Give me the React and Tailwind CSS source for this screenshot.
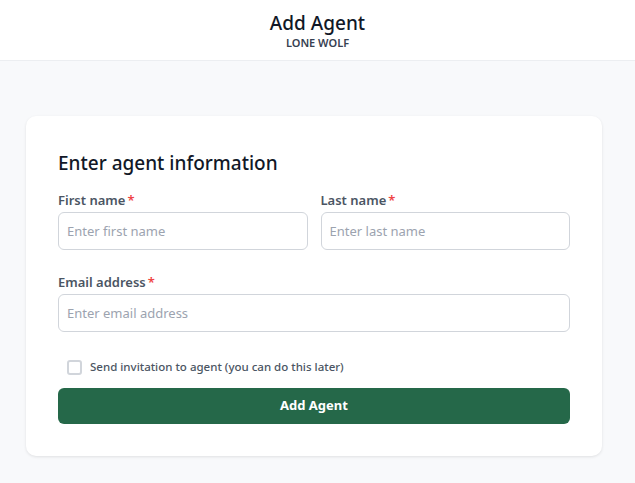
export default function App() {
  return (
    <div
      className="min-h-[483px] bg-[#f8f9fb] text-[#111827]"
      style={{ fontFamily: '"Noto Sans", sans-serif' }}
    >
      <Header></Header>
      <div className="pt-[55px] pl-[26px]">
        <AgentForm></AgentForm>
      </div>
    </div>
  );
}

function Header() {
  return (
    <div className="h-[61px] bg-white border-b border-[#eceef1] flex flex-col items-center pt-[10px]">
      <h1 className="text-[19px] leading-[26px] font-medium text-[#111827]">Add Agent</h1>
      <span className="text-[11px] leading-[14px] font-semibold text-[#374151]">LONE WOLF</span>
    </div>
  );
}

function Label({ children }) {
  return (
    <label className="block text-[13px] leading-[18px] font-semibold text-[#4b5563] mb-[3px]">
      {children}
      <span className="text-[#ef4444] ml-[2px]">*</span>
    </label>
  );
}

function Input({ placeholder }) {
  return (
    <input
      type="text"
      placeholder={placeholder}
      className="w-full h-[38px] px-[8px] rounded-md border border-[#d1d5db] bg-white text-[13px] outline-none placeholder:text-[#9ca3af]"
    />
  );
}

function AgentForm() {
  return (
    <div className="w-[576px] bg-white rounded-[10px] shadow-[0_1px_3px_rgba(0,0,0,0.1)] px-[32px] pt-[34px] pb-[32px]">
      <h2 className="text-[19px] leading-[26px] font-medium text-[#111827] mb-[15px]">
        Enter agent information
      </h2>
      <div className="grid grid-cols-2 gap-x-[13px]">
        <div>
          <Label>First name</Label>
          <Input placeholder="Enter first name"></Input>
        </div>
        <div>
          <Label>Last name</Label>
          <Input placeholder="Enter last name"></Input>
        </div>
      </div>
      <div className="mt-[23px]">
        <Label>Email address</Label>
        <Input placeholder="Enter email address"></Input>
      </div>
      <div className="flex items-center mt-[27px] pl-[9px] gap-[8px]">
        <input
          type="checkbox"
          className="appearance-none w-[15px] h-[15px] rounded-[3px] border-2 border-[#d1d5db] bg-white"
        />
        <span className="text-[11.5px] leading-[16px] font-medium text-[#4b5563]">
          Send invitation to agent (you can do this later)
        </span>
      </div>
      <button className="mt-[13px] w-full h-[36px] rounded-md bg-[#256849] text-white text-[13px] font-bold">
        Add Agent
      </button>
    </div>
  );
}
